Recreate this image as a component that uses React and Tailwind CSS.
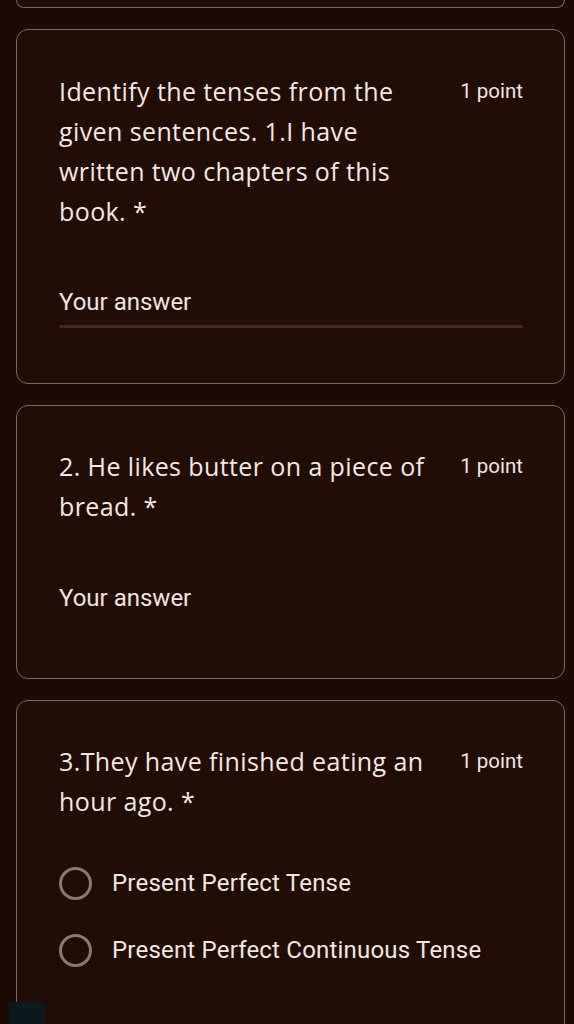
import React from 'react'

const Card = ({ children, className = '' }) => (
    <div className={`rounded-xl border border-[#7b6761] bg-[#220c06] pl-[42px] pr-[41px] ${className}`}>
        {children}
    </div>
)

const Header = ({ title }) => (
    <div className="flex justify-between items-start">
        <p className="w-[378px] text-[25px] leading-[40px] tracking-[0.4px] text-[#f3e9e5] font-['Open_Sans',sans-serif]">
            {title}
        </p>
        <span className="pt-[6px] text-[20.5px] leading-[28px] text-[#efe5e1] font-['Roboto',sans-serif]">
            1 point
        </span>
    </div>
)

const Radio = ({ label }) => (
    <div className="flex items-center gap-[20px] h-[34px]">
        <span className="w-[33px] h-[33px] rounded-full border-[3px] border-[#8c7771] shrink-0"></span>
        <span className="text-[24px] tracking-[0.2px] text-[#f1e7e3] font-['Roboto',sans-serif]">{label}</span>
    </div>
)

export default function App() {
    return (
        <div className="relative h-[1024px] bg-[#1e0a05] pl-4 pr-[9px] overflow-hidden">
            <div className="h-[8px] rounded-b-xl border-x border-b border-[#7b6761] bg-[#220c06]"></div>

            <Card className="mt-[21px] pt-[41px] pb-[55px]">
                <Header title="Identify the tenses from the given sentences. 1.I have written two chapters of this book. *" />
                <p className="mt-[57px] text-[24px] leading-[28px] text-[#efe5e1] font-['Roboto',sans-serif]">
                    Your answer
                </p>
                <div className="mt-[9px] h-[3px] bg-[#4b2722] rounded-full"></div>
            </Card>

            <Card className="mt-[21px] pt-[40px] pb-[52px]">
                <Header title="2. He likes butter on a piece of bread. *" />
                <p className="mt-[58px] text-[24px] leading-[28px] text-[#efe5e1] font-['Roboto',sans-serif]">
                    Your answer
                </p>
                <div className="mt-[13px] h-px bg-[#2a130d]"></div>
            </Card>

            <Card className="mt-[21px] pt-[40px] pb-[80px]">
                <Header title="3.They have finished eating an hour ago. *" />
                <div className="mt-[45px] flex flex-col gap-[33px]">
                    <Radio label="Present Perfect Tense" />
                    <Radio label="Present Perfect Continuous Tense" />
                </div>
            </Card>

            <div className="absolute left-[9px] bottom-0 w-[36px] h-[22px] bg-[#0c1a1e]"></div>
        </div>
    )
}
